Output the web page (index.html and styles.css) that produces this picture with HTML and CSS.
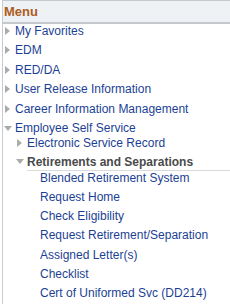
FILE: index.html
```html
<!DOCTYPE html>
<html>
<head>
<meta charset="utf-8">
<link rel="stylesheet" href="styles.css">
</head>
<body>
<div class="menu">
  <div class="menu-head">Menu</div>
  <ul class="tree">
    <li class="node closed"><span class="arrow right"></span><a>My Favorites</a></li>
    <li class="node closed"><span class="arrow right"></span><a>EDM</a></li>
    <li class="node closed"><span class="arrow right"></span><a>RED/DA</a></li>
    <li class="node closed"><span class="arrow right"></span><a>User Release Information</a></li>
    <li class="node closed"><span class="arrow right"></span><a>Career Information Management</a></li>
    <li class="node open">
      <div class="row"><span class="arrow down"></span><a>Employee Self Service</a></div>
      <ul class="sub">
        <li class="subnode"><span class="arrow right"></span><a>Electronic Service Record</a></li>
        <li class="folder">
          <div class="folder-row"><span class="arrow down"></span><span class="folder-title">Retirements and Separations</span></div>
          <ul class="leaves">
            <li><a>Blended Retirement System</a></li>
            <li><a>Request Home</a></li>
            <li><a>Check Eligibility</a></li>
            <li><a>Request Retirement/Separation</a></li>
            <li><a>Assigned Letter(s)</a></li>
            <li><a>Checklist</a></li>
            <li><a>Cert of Uniformed Svc (DD214)</a></li>
          </ul>
        </li>
      </ul>
    </li>
  </ul>
</div>
</body>
</html>
```
FILE: styles.css
```css
html, body { margin: 0; padding: 0; background: #fff; }
body { font-family: "Liberation Sans", Arial, sans-serif; font-size: 12px; }
.menu {
  width: 228px;
  height: 304px;
  border-left: 1px solid #c8ccd1;
  margin-left: 2px;
  overflow: hidden;
}
.menu-head {
  background: #eef2f5;
  border-top: 1px solid #c5c9ce;
  border-bottom: 2px solid #c5c9ce;
  height: 21px;
  line-height: 21px;
  padding-left: 2px;
  color: #ad5c1c;
  font-weight: bold;
  font-size: 13px;
  margin-left: -1px;
}
ul { list-style: none; margin: 0; padding: 0; }
a { color: #1c3f94; }
.tree { margin-top: -3px; }
.node.closed { display: flex; align-items: center; height: 19.5px; }
.row { display: flex; align-items: center; height: 19px; }
.arrow { display: inline-block; width: 0; height: 0; flex: none; }
.arrow.right {
  border-top: 4px solid transparent;
  border-bottom: 4px solid transparent;
  border-left: 5px solid #ababab;
  margin-left: 2px;
  margin-right: 5px;
}
.arrow.down {
  border-left: 4px solid transparent;
  border-right: 4px solid transparent;
  border-top: 5px solid #ababab;
  margin-left: 1px;
  margin-right: 3px;
}
.sub { padding-left: 11px; }
.subnode { display: flex; align-items: center; height: 15px; margin-top: -2px; }
.subnode .arrow.right { margin-left: 3px; margin-right: 5px; }
.folder-row { display: flex; align-items: center; height: 16px; margin-top: 3px; }
.folder-row .arrow.down { margin-left: 2px; margin-right: 3px; }
.folder-title { color: #4a4a4a; font-weight: bold; }
.leaves { margin-left: 13px; border-top: 1px solid #d8dadd; padding-left: 13px; }
.leaves li { height: 19.3px; line-height: 14px; }
```
